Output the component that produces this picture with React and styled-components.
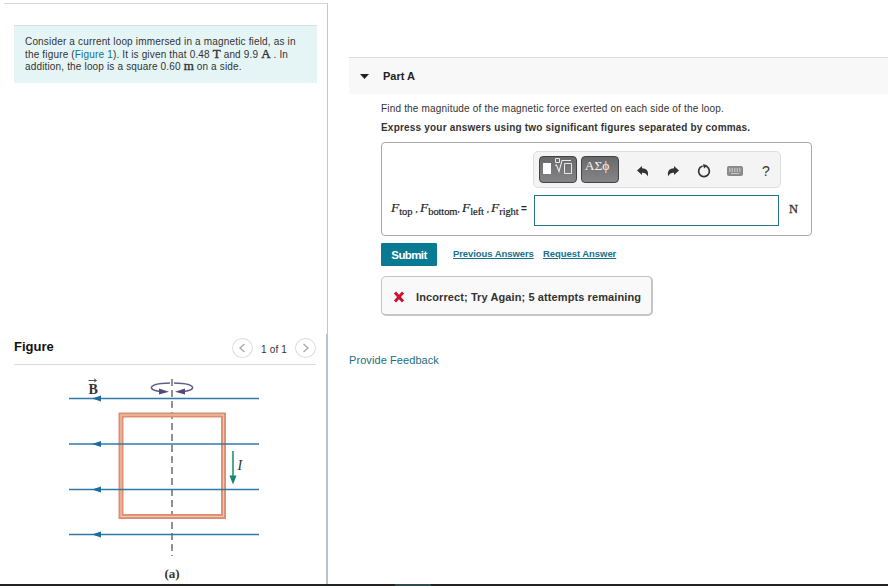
import React from "react";
import styled, { createGlobalStyle } from "styled-components";

const GlobalStyle = createGlobalStyle`
	* {
		box-sizing: border-box;
	}
	body {
		margin: 0;
		background: #fff;
		color: #333;
		font-family: "Liberation Sans", Arial, sans-serif;
	}
`

const Page = styled.div`
	display: flex;
	flex-direction: column;
	width: 888px;
	height: 586px;
	overflow: hidden;
`

const Columns = styled.div`
	display: flex;
	height: 584px;
`

const Sidebar = styled.aside`
	display: flex;
	flex-direction: column;
	width: 328px;
	padding-top: 3px;
`

const PromptPane = styled.div`
	height: 331px;
	margin-left: 4px;
	padding: 21px 10px 0;
	border-top: 1px solid #d5d8da;
	border-right: 1px solid #c3c7cb;
`

const Prompt = styled.div`
	width: 303px;
	height: 58px;
	padding: 10px 0 0 11px;
	border-top: 1px solid #d3dfe0;
	background: #e5f5f6;
`

const Line = styled.div`
	height: ${(props) => props.$height || 12.5}px;
	line-height: ${(props) => props.$height || 12.5}px;
	font-size: ${(props) => props.$size || 10}px;
	font-weight: ${(props) => (props.$bold ? 700 : 400)};
	letter-spacing: ${(props) => props.$spacing || 0}px;
	white-space: nowrap;
`

const Unit = styled.span`
	font-family: "Liberation Serif", serif;
	font-size: 13px;
	line-height: 1px;
	letter-spacing: 0;
	-webkit-text-stroke: 0.35px #333;
`

const FigureLink = styled.span`
	color: #14708a;
`

const FigurePane = styled.div`
	width: 328px;
	height: 250px;
	padding: 0 9px 0 14px;
	border-right: 2px solid #b9c2cc;
`

const FigureHeader = styled.div`
	display: flex;
	align-items: center;
	width: 302px;
	height: 31px;
	border-bottom: 1px solid #dcdcd8;
`

const FigureTitle = styled.div`
	flex: 1;
	margin-top: -5px;
	color: #111;
	font-size: 13px;
	font-weight: 700;
`

const PageCount = styled.div`
	width: 42px;
	text-align: center;
	font-size: 10px;
	letter-spacing: 0.15px;
`

const RoundButton = styled.button`
	display: flex;
	align-items: center;
	justify-content: center;
	width: 21px;
	height: 20px;
	margin-top: -2px;
	padding: 0;
	border: 1px solid #dcdcdc;
	border-radius: 50%;
	background: #fff;
`

const Main = styled.main`
	flex: 1;
	padding: 57px 0 0 21px;
`

const PartHeader = styled.div`
	display: flex;
	align-items: center;
	gap: 14px;
	height: 37px;
	padding-left: 11px;
	border-top: 1px solid #dcdcdc;
	background: #f8f8f8;
	color: #222;
`

const PartBody = styled.div`
	padding: 8px 0 0 32px;
`

const AnswerBox = styled.div`
	display: flex;
	width: 431px;
	height: 94px;
	margin-top: 3px;
	border: 1px solid #a6a8a9;
	border-radius: 4px;
`

const Formula = styled.div`
	display: flex;
	align-items: baseline;
	width: 152px;
	height: 24px;
	margin-top: 57px;
	padding-left: 9px;
	font-family: "Liberation Serif", serif;
	white-space: nowrap;
	color: #222;
`

const Variable = styled.span`
	width: ${(props) => props.$width}px;
	font-size: 13.5px;
	font-style: italic;
	-webkit-text-stroke: 0.2px #222;
`

const Subscript = styled.span`
	position: relative;
	top: 3px;
	margin-right: ${(props) => props.$gap || 0}px;
	font-size: 10.5px;
	font-style: normal;
	letter-spacing: -0.1px;
`

const Comma = styled.span`
	font-size: 9px;
`

const Equals = styled.span`
	font-family: "Liberation Sans", sans-serif;
	font-size: 10px;
	font-weight: 700;
`

const Editor = styled.div`
	padding-top: 8px;
`

const Toolbar = styled.div`
	display: flex;
	align-items: center;
	width: 248px;
	height: 37px;
	margin-left: -1px;
	padding-left: 5px;
	border: 1px solid #dedede;
	border-radius: 5px;
	background: #f4f4f4;
`

const MathButton = styled.button`
	width: 38px;
	height: 27px;
	margin: -1px 4px 0 0;
	padding: 0 ${(props) => props.$right || 0}px 7px 0;
	border: 1px solid #434345;
	border-radius: 4px;
	background: linear-gradient(#69696b, #858587);
	color: #f4f4f4;
	font-family: "Liberation Serif", serif;
	font-size: 13.5px;
	line-height: 17px;
`

const ToolIcon = styled.div`
	display: flex;
	align-items: center;
	justify-content: center;
	width: 16px;
	height: 18px;
	margin: 3px 0 0 ${(props) => props.$left}px;
	font-size: 14px;
	color: #333;
`

const AnswerInput = styled.input`
	display: block;
	width: 245px;
	height: 31px;
	margin-top: 7px;
	border: 1px solid #267680;
	background: #fff;
	outline: none;
`

const ResultUnit = styled.div`
	margin: 58px 0 0 8px;
	font-family: "Liberation Serif", serif;
	font-size: 12.5px;
	line-height: 16px;
	-webkit-text-stroke: 0.3px #333;
`

const Actions = styled.div`
	display: flex;
	margin-top: 7px;
`

const SubmitButton = styled.button`
	width: 56px;
	height: 23px;
	margin-right: 16px;
	padding: 1px 0 0;
	border: 0;
	border-radius: 1px;
	background: #087a94;
	color: #fff;
	font-family: "Liberation Sans", sans-serif;
	font-size: 11.5px;
	font-weight: 700;
	letter-spacing: -0.6px;
`

const ActionLink = styled.a`
	width: 90px;
	height: 20px;
	color: #17718a;
	font-size: 9.5px;
	font-weight: 700;
	line-height: 21px;
	letter-spacing: ${(props) => props.$spacing}px;
	text-decoration: underline;
	text-underline-offset: 1px;
	white-space: nowrap;
`

const Result = styled.div`
	display: flex;
	align-items: center;
	gap: 11px;
	width: 272px;
	height: 40px;
	margin-top: 10px;
	padding: 3px 0 0 11px;
	border: 1px solid #c4c4c4;
	border-right-width: 2px;
	border-bottom-width: 2px;
	border-radius: 5px;
	background: #f9f9f9;
	color: #333;
`

const Feedback = styled.div`
	margin-top: 37px;
	color: #176f80;
	font-size: 11px;
	line-height: 14px;
	letter-spacing: 0.08px;
`

const BottomBar = styled.div`
	height: 2px;
	background: linear-gradient(to right, #222 395px, #2b4b59 395px 431px, #222 431px);
`

const fieldLines = [399, 444.5, 490, 535]

function Chevron({ right }) {
	return (
		<svg width="9" height="10" viewBox="0 0 9 10" fill="none" stroke="#aaa" strokeWidth="1.4">
			<path d={right ? "M2.5 1 7 5 2.5 9" : "M6.5 1 2 5 6.5 9"} />
		</svg>
	)
}

function LoopFigure() {
	return (
		<svg width="302" height="218" viewBox="14 365 302 218" fill="none">
			<path d="M172 379V556" stroke="#777" strokeWidth="1.6" strokeDasharray="7 4" />
			<rect x="121" y="415" width="102.500" height="101.500" stroke="#dc8f70" strokeWidth="5" />
			<rect x="121" y="415" width="102.500" height="101.500" stroke="#f2c6b2" strokeWidth="1.200" />
			{fieldLines.map((y) => (
				<g key={y}>
					<path d={`M69 ${y - 0.5}H259`} stroke="#2f78a8" strokeWidth="1.6" />
					<path d={`M92 ${y - 0.5}l9-3v6z`} fill="#1c6ba0" />
				</g>
			))}
			<path d="M170 383C157 383 151 385.500 151.500 388C152 390 156 391 161 391.500M174 383C187 383 193 385.500 192.500 388C192 390 188 391 183 391.500" stroke="#655b86" strokeWidth="1.6" />
			<path d="M169 391.800 159 388.500V394.500zM175 391.800 185 388.500V394.500z" fill="#57487c" />
			<path d="M233 451V478" stroke="#37a184" strokeWidth="1.8" />
			<path d="M233 484.500 229.500 475.500H236.500z" fill="#16876c" />
			<text x="88.500" y="394" fill="#333" fontFamily="Liberation Serif, serif" fontSize="14" fontWeight="700">B</text>
			<path d="M88.500 380.500H96M94 378.800 96.500 380.500 94 382.200" stroke="#444" strokeWidth="0.9" />
			<text x="237.500" y="470" fill="#333" fontFamily="Liberation Serif, serif" fontSize="14" fontStyle="italic">I</text>
			<text x="172" y="578" fill="#333" fontFamily="Liberation Serif, serif" fontSize="13" fontWeight="700" textAnchor="middle">(a)</text>
		</svg>
	)
}

function RootIcon() {
	return (
		<svg width="34" height="20" viewBox="0 0 34 20" fill="none" stroke="#e8e8e8">
			<path d="M2 6H10V17H2z" fill="#fff" stroke="none" />
			<path d="M14 8.500 15.500 8 18 14.500 21 3.500H30" strokeWidth="1.100" />
			<path d="M14.500 1.500H18.500V5.500H14.500z" strokeWidth="1" />
			<path d="M23.500 6.500H30.500V16.500H23.500z" strokeWidth="1" />
		</svg>
	)
}

function UndoIcon({ flip }) {
	return (
		<svg width="12" height="11" viewBox="0 0 12 11">
			<path
				transform={flip ? "translate(12 0) scale(-1 1)" : undefined}
				d="M0 4.500 5 0V2.300C9.500 2.300 12 5 10.800 10.500C9.500 7.400 8 6.700 5 6.700V9z"
				fill="#333"
			/>
		</svg>
	)
}

function ResetIcon() {
	return (
		<svg width="14" height="14" viewBox="0 0 14 14" fill="none">
			<path d="M5 2.200A5.400 5.400 0 1 0 9.800 2.600" stroke="#333" strokeWidth="1.700" />
			<path d="M5 2.200Q7.500 1.300 9.800 2.600" stroke="#333" strokeWidth="1" />
			<path d="M6.200 0 10.500 1.600 7 4.600z" fill="#333" />
		</svg>
	)
}

function KeyboardIcon() {
	return (
		<svg width="16" height="10" viewBox="0 0 16 10">
			<rect x="0.500" y="0.500" width="15" height="9" rx="1" fill="#8d8d8d" stroke="#888" />
			<path d="M2 3H14M2 5H14" stroke="#e4e4e4" strokeWidth="1" strokeDasharray="1.500 1" />
			<path d="M4 7.500H12" stroke="#c8c8c8" />
		</svg>
	)
}

export default function App() {
	return (
		<>
			<GlobalStyle />
			<Page>
				<Columns>
					<Sidebar>
						<PromptPane>
							<Prompt>
								<Line $spacing={0.17}>Consider a current loop immersed in a magnetic field, as in</Line>
								<Line $spacing={0.17}>
									the figure (<FigureLink>Figure 1</FigureLink>). It is given that 0.48 <Unit>T</Unit> and 9.9 <Unit>A</Unit> . In
								</Line>
								<Line $spacing={0.16}>addition, the loop is a square 0.60 <Unit>m</Unit> on a side.</Line>
							</Prompt>
						</PromptPane>
						<FigurePane>
							<FigureHeader>
								<FigureTitle>Figure</FigureTitle>
								<RoundButton><Chevron /></RoundButton>
								<PageCount>1 of 1</PageCount>
								<RoundButton><Chevron right /></RoundButton>
							</FigureHeader>
							<LoopFigure />
						</FigurePane>
					</Sidebar>
					<Main>
						<PartHeader>
							<svg width="9" height="5" viewBox="0 0 9 5"><path d="M0 0H9L4.500 5z" fill="#222" /></svg>
							<Line $size={11} $bold>Part A</Line>
						</PartHeader>
						<PartBody>
							<Line $height={14} $spacing={0.18}>Find the magnitude of the magnetic force exerted on each side of the loop.</Line>
							<Line $height={23} $bold $spacing={0.2}>Express your answers using two significant figures separated by commas.</Line>
							<AnswerBox>
								<Formula>
									<Variable $width={29}>F<Subscript $gap={3}>top</Subscript><Comma>,</Comma></Variable>
									<Variable $width={42}>F<Subscript>bottom</Subscript><Comma>,</Comma></Variable>
									<Variable $width={29}>F<Subscript $gap={3}>left</Subscript><Comma>,</Comma></Variable>
									<Variable $width={30}>F<Subscript>right</Subscript></Variable>
									<Equals>=</Equals>
								</Formula>
								<Editor>
									<Toolbar>
										<MathButton><RootIcon /></MathButton>
										<MathButton $right={6}>ΑΣϕ</MathButton>
										<ToolIcon $left={12}><UndoIcon /></ToolIcon>
										<ToolIcon $left={14}><UndoIcon flip /></ToolIcon>
										<ToolIcon $left={15}><ResetIcon /></ToolIcon>
										<ToolIcon $left={15}><KeyboardIcon /></ToolIcon>
										<ToolIcon $left={15}>?</ToolIcon>
									</Toolbar>
									<AnswerInput />
								</Editor>
								<ResultUnit>N</ResultUnit>
							</AnswerBox>
							<Actions>
								<SubmitButton>Submit</SubmitButton>
								<ActionLink $spacing={-0.08}>Previous Answers</ActionLink>
								<ActionLink $spacing={-0.06}>Request Answer</ActionLink>
							</Actions>
							<Result>
								<svg width="12" height="12" viewBox="0 0 12 12"><path d="M2 1.500 10 10.500M10 1.500 2 10.500" stroke="#cf1233" strokeWidth="3" /></svg>
								<Line $size={11} $bold $spacing={0.1}>Incorrect; Try Again; 5 attempts remaining</Line>
							</Result>
						</PartBody>
						<Feedback>Provide Feedback</Feedback>
					</Main>
				</Columns>
				<BottomBar />
			</Page>
		</>
	)
}
